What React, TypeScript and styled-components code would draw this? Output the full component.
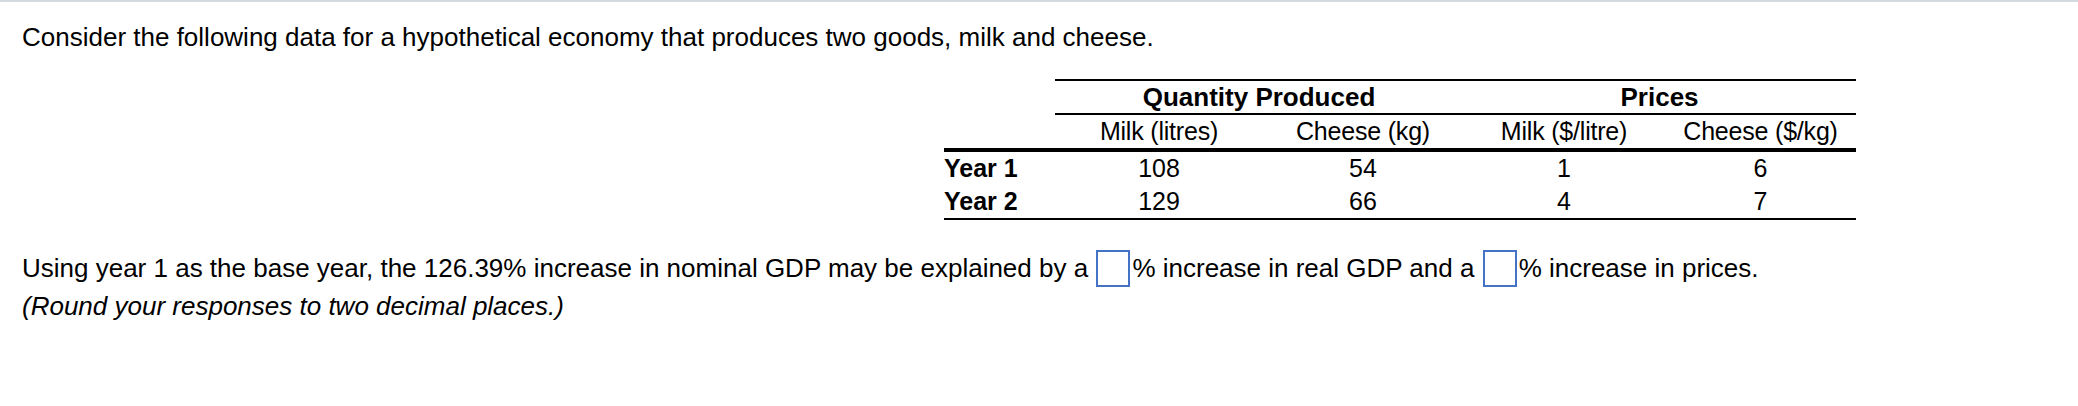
import React from "react";
import styled, { createGlobalStyle } from "styled-components";

const GlobalStyle = createGlobalStyle`
  html, body {
    margin: 0;
    padding: 0;
    background: #ffffff;
  }
  body {
    font-family: "Liberation Sans", Arial, Helvetica, sans-serif;
    color: #000000;
  }
`;

const Page = styled.div`
  width: 2078px;
  height: 406px;
  overflow: hidden;
  background: #ffffff;
  border-top: 2px solid #d5d9e0;
  box-sizing: border-box;
`;

const Content = styled.div`
  padding: 16px 0 0 22px;
`;

const Paragraph = styled.p<{ $italic?: boolean }>`
  margin: 0;
  font-size: 26px;
  line-height: 38px;
  font-style: ${(p) => (p.$italic ? "italic" : "normal")};
  white-space: nowrap;
`;

const QuestionBlock = styled.div`
  margin-top: 29px;
`;

const DataTable = styled.table`
  margin: 23px 0 0 922px;
  border-collapse: collapse;
  table-layout: fixed;
  width: 912px;
`;

const Col = styled.col<{ $w: number }>`
  width: ${(p) => p.$w}px;
`;

const GroupHead = styled.th`
  font-size: 26px;
  font-weight: 700;
  line-height: 32px;
  height: 32px;
  padding: 0;
  text-align: center;
  border-top: 2px solid #000;
  border-bottom: 2px solid #000;
`;

const BlankHead = styled.th`
  padding: 0;
`;

const SubHead = styled.th`
  font-size: 25px;
  font-weight: 400;
  line-height: 33px;
  height: 33px;
  padding: 0;
  text-align: center;
  white-space: nowrap;
  letter-spacing: -0.2px;
  border-bottom: 4px solid #000;
`;

const RowHead = styled.th<{ $last?: boolean }>`
  font-size: 25px;
  font-weight: 700;
  line-height: 33px;
  height: 33px;
  padding: 0;
  text-align: left;
  border-bottom: ${(p) => (p.$last ? "2px solid #000" : "none")};
`;

const Cell = styled.td<{ $last?: boolean }>`
  font-size: 25px;
  line-height: 33px;
  height: 33px;
  padding: 0;
  text-align: center;
  border-bottom: ${(p) => (p.$last ? "2px solid #000" : "none")};
`;

const AnswerBox = styled.span`
  display: inline-block;
  box-sizing: border-box;
  width: 34px;
  height: 37px;
  margin: 0 2px 0 1px;
  border: 2px solid #4472c4;
  background: #ffffff;
  vertical-align: -10px;
`;

const columns = [111, 208, 200, 202, 191];

const rows = [
  { label: "Year 1", values: ["108", "54", "1", "6"] },
  { label: "Year 2", values: ["129", "66", "4", "7"] },
];

export default function App() {
  return (
    <>
      <GlobalStyle />
      <Page>
        <Content>
          <Paragraph>
            Consider the following data for a hypothetical economy that produces two goods, milk and cheese.
          </Paragraph>
          <DataTable>
            <colgroup>
              {columns.map((w, i) => (
                <Col key={i} $w={w} />
              ))}
            </colgroup>
            <thead>
              <tr>
                <BlankHead />
                <GroupHead colSpan={2}>Quantity Produced</GroupHead>
                <GroupHead colSpan={2}>Prices</GroupHead>
              </tr>
              <tr>
                <SubHead />
                <SubHead>Milk (litres)</SubHead>
                <SubHead>Cheese (kg)</SubHead>
                <SubHead>Milk ($/litre)</SubHead>
                <SubHead>Cheese ($/kg)</SubHead>
              </tr>
            </thead>
            <tbody>
              {rows.map((r, i) => {
                const last = i === rows.length - 1;
                return (
                  <tr key={r.label}>
                    <RowHead $last={last}>{r.label}</RowHead>
                    {r.values.map((v, j) => (
                      <Cell key={j} $last={last}>
                        {v}
                      </Cell>
                    ))}
                  </tr>
                );
              })}
            </tbody>
          </DataTable>
          <QuestionBlock>
            <Paragraph>
              Using year 1 as the base year, the 126.39% increase in nominal GDP may be explained by a{" "}
              <AnswerBox />% increase in real GDP and a <AnswerBox />% increase in prices.
            </Paragraph>
            <Paragraph $italic>(Round your responses to two decimal places.)</Paragraph>
          </QuestionBlock>
        </Content>
      </Page>
    </>
  );
}
